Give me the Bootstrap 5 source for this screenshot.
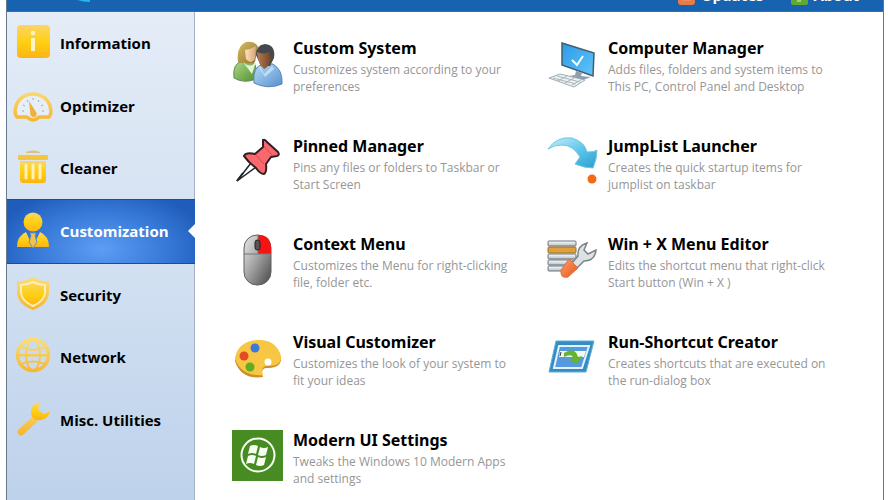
<!DOCTYPE html>
<html lang="en">
<head>
<meta charset="utf-8">
<meta name="viewport" content="width=device-width, initial-scale=1">
<title>Customization</title>
<link href="https://cdn.jsdelivr.net/npm/bootstrap@5.3.0/dist/css/bootstrap.min.css" rel="stylesheet">
<style>
body { font-family: "Open Sans", "Noto Sans", sans-serif; background: #fff; color: #000; }
.app-window { margin: 0 4px 0 6px; border: solid #65788c; border-width: 0 1px; }
.title-strip { height: 12px; background: #1763b0; border-bottom: 1px solid #3b6c9f; overflow: hidden; padding: 0 24px 0 68px; }
.title-strip a { color: #fff; font-size: 15px; font-weight: 700; line-height: 20px; gap: 6px; margin-bottom: 6px; }
.title-links { gap: 27px; }
.side-menu { width: 188px; flex: none; padding-bottom: 49px; background: linear-gradient(#e4ecf7, #d3e1f2 50%, #bed2eb); border-right: 1px solid #a4b2c4; }
.side-link { flex: 1 1 0; min-height: 60px; padding-left: 6px; gap: 7px; color: #000; font-size: 15px; font-weight: 700; line-height: 20px; }
.side-link svg { width: 40px; height: 40px; flex: none; }
.side-link.active { position: relative; color: #fff; margin-right: -1px; border: solid #164e9f; border-width: 1px 0; background: radial-gradient(ellipse 110px 62px at 50% 78%, #5d9df5, #3476d5 65%, #205cba); }
.side-link.active::after { content: ""; position: absolute; right: 0; top: 50%; margin-top: -7px; border: solid transparent; border-width: 7px 7px 7px 0; border-right-color: #fff; }
.feature-grid { display: grid; grid-template-columns: repeat(auto-fill, 315px); grid-auto-rows: 58px; row-gap: 40px; padding: 24px 20px 0 37px; align-content: start; }
.feature { color: #969696; gap: 9px; }
.feature svg { width: 52px; height: 52px; flex: none; margin-top: 2px; }
.feature h2 { font-family: "Noto Sans", "Open Sans", sans-serif; font-size: 16px; line-height: 24px; font-weight: 700; color: #000; margin: 0; }
.feature p { font-size: 12px; line-height: 17px; margin: 0; padding-top: 1px; white-space: nowrap; }
</style>
<script src="https://cdn.jsdelivr.net/npm/bootstrap@5.3.0/dist/js/bootstrap.bundle.min.js"></script>
</head>
<body>
<svg width="0" height="0" class="position-absolute" aria-hidden="true">
<defs>
<linearGradient id="gold" x2="0" y2="1"><stop stop-color="#fbd568"/><stop offset=".5" stop-color="#ffd012"/><stop offset="1" stop-color="#fcb414"/></linearGradient>
<linearGradient id="goldline" gradientUnits="userSpaceOnUse" x1="0" y1="3" x2="0" y2="37"><stop stop-color="#fbdc74"/><stop offset="1" stop-color="#f5b42c"/></linearGradient>
<linearGradient id="green" x2="1" y2="1"><stop stop-color="#b1d98a"/><stop offset="1" stop-color="#4f8f2d"/></linearGradient>
<linearGradient id="blue" x2="1" y2="1"><stop stop-color="#b6dcf8"/><stop offset="1" stop-color="#5790cd"/></linearGradient>
<linearGradient id="hair" x2="1" y2="1"><stop stop-color="#d7bd65"/><stop offset="1" stop-color="#8f7428"/></linearGradient>
<linearGradient id="face" x2="1"><stop stop-color="#fce2c0"/><stop offset="1" stop-color="#d7a577"/></linearGradient>
<linearGradient id="dark" x2="1"><stop stop-color="#b57c51"/><stop offset="1" stop-color="#744329"/></linearGradient>
<linearGradient id="screen" x2="1" y2="1"><stop stop-color="#2b9be8"/><stop offset="1" stop-color="#62c4fa"/></linearGradient>
<linearGradient id="arrow" x2="1" y2="1"><stop stop-color="#c8effb"/><stop offset=".55" stop-color="#5bc4e8"/><stop offset="1" stop-color="#279fce"/></linearGradient>
<linearGradient id="mouse" x2="1" y2="1"><stop stop-color="#ececec"/><stop offset=".45" stop-color="#a7a7a7"/><stop offset="1" stop-color="#474747"/></linearGradient>
<linearGradient id="handle" x2="1" y2="1"><stop stop-color="#ffa06d"/><stop offset="1" stop-color="#e65418"/></linearGradient>
<linearGradient id="bar" x2="0" y2="1"><stop stop-color="#fff"/><stop offset="1" stop-color="#b5bdc3"/></linearGradient>
</defs>
</svg>
<div class="app-window min-vh-100 d-flex flex-column">
  <header class="title-strip d-flex justify-content-between align-items-end">
    <svg class="align-self-start" width="16" height="4" viewBox="0 0 16 4" aria-hidden="true"><path d="M2 0H15V2Q8 2 2 0Z" fill="#22b5ee"/></svg>
    <div class="title-links d-flex align-items-end">
      <a href="#" class="d-flex align-items-end text-decoration-none"><svg width="17" height="16" viewBox="0 0 17 16" aria-hidden="true"><rect width="17" height="16" rx="3" fill="#e87949"/><path d="M4 4H13V12H4Z" fill="#ef8c60"/></svg>Updates</a>
      <a href="#" class="d-flex align-items-end text-decoration-none"><svg width="17" height="16" viewBox="0 0 17 16" aria-hidden="true"><rect width="17" height="16" rx="2" fill="#61a832"/><path d="M6 3H10V13H6Z" fill="#a6cf7b"/></svg>About</a>
    </div>
  </header>
  <div class="d-flex flex-grow-1">
    <nav class="side-menu d-flex flex-column" aria-label="Sections">
      <a href="#" class="side-link d-flex align-items-center text-decoration-none"><svg viewBox="0 0 40 40" aria-hidden="true"><rect x="4" y="2" width="33" height="33" rx="4" fill="url(#gold)"/><circle cx="20" cy="10" r="2.300" fill="#fff2c4"/><path d="M18 15H22V28H18Z" fill="#fff2c4"/></svg>Information</a>
      <a href="#" class="side-link d-flex align-items-center text-decoration-none"><svg viewBox="0 0 40 40" aria-hidden="true"><path d="M4 31Q1 28 2.800 21A17.500 16 0 0 1 37.200 21Q39 28 36 31H26Q20 37 14 31Z" fill="#e6eef7" stroke="url(#goldline)" stroke-width="3.500" stroke-linejoin="round"/><path d="M9 25h2M10 19l2 1M14 14l1 2M20 12v2M26 14l-1 2M30 19l-2 1M31 25h-2" stroke="#9daab5"/><path d="M16 15L23 26A3.200 3.200 0 1 1 17.300 28Z" fill="#edb13d"/></svg>Optimizer</a>
      <a href="#" class="side-link d-flex align-items-center text-decoration-none"><svg viewBox="0 0 40 40" aria-hidden="true"><path d="M13 4Q20 1 27 4V5H13Z" fill="#dec076"/><rect x="5" y="7" width="30" height="5" rx="1" fill="#f4c53f"/><path d="M7 13H33V32Q33 35 30 35H10Q7 35 7 32Z" fill="url(#gold)"/><path d="M13 17V30M20 17V30M27 17V30" stroke="#fff0b6" stroke-width="3" stroke-linecap="round"/></svg>Cleaner</a>
      <a href="#" class="side-link active d-flex align-items-center text-decoration-none" aria-current="page"><svg viewBox="0 0 40 40" aria-hidden="true"><circle cx="20" cy="11" r="9.500" fill="url(#gold)"/><path d="M4 36Q4 25 13 21L20 36L27 21Q36 25 36 36Z" fill="url(#gold)"/><path d="M17 22H23L22 25L24 31L20 37L16 31L18 25Z" fill="#f2c24b" stroke="#6d91b9"/></svg>Customization</a>
      <a href="#" class="side-link d-flex align-items-center text-decoration-none"><svg viewBox="0 0 40 40" aria-hidden="true"><path d="M20 2Q28 7 36 6V17Q36 29 20 35Q4 29 4 17V6Q12 7 20 2Z" fill="url(#goldline)"/><path d="M20 7Q26 10 32 10V18Q31 26 20 31Q9 26 8 18V10Q14 10 20 7Z" fill="url(#gold)" stroke="#fff0b0" stroke-width="2"/></svg>Security</a>
      <a href="#" class="side-link d-flex align-items-center text-decoration-none"><svg viewBox="0 0 40 40" aria-hidden="true"><g fill="none" stroke="url(#goldline)"><circle cx="20" cy="18" r="15.500" stroke-width="3.500"/><ellipse cx="20" cy="18" rx="7" ry="15" stroke-width="2"/><path d="M8 10Q20 16 32 10M5 18.500H35M5 18H35M8 27Q20 22 32 27" stroke-width="2"/></g></svg>Network</a>
      <a href="#" class="side-link d-flex align-items-center text-decoration-none"><svg viewBox="0 0 40 40" aria-hidden="true"><path d="M8 32L21 20" stroke="url(#goldline)" stroke-width="7" stroke-linecap="round"/><path d="M27 2Q17 4 18 14Q20 21 28 20Q36 18 37 11L31 14L25 10Z" fill="url(#gold)"/></svg>Misc. Utilities</a>
    </nav>
    <main class="feature-grid flex-grow-1">
      <a href="#" class="feature d-flex align-items-start text-decoration-none"><svg viewBox="0 0 52 52" aria-hidden="true"><path d="M2 40Q0 25 11 23L21 24Q26 29 24 41Q12 46 2 40Z" fill="url(#green)" stroke="#65884f"/><path d="M6 24Q4 8 14 4Q24 3 26 9L23 24Q17 27 6 24Z" fill="url(#hair)"/><path d="M13 12Q19 11 24 8L23 21Q19 27 14 21Z" fill="url(#face)"/><path d="M11 24Q18 31 24 24L20 36Z" fill="#e8f0d5"/><path d="M22 45Q20 29 31 26L41 26Q51 32 50 46Q36 52 22 45Z" fill="url(#blue)" stroke="#5a87b4"/><path d="M24 17Q24 7 33 6Q44 7 42 20L38 28H29Z" fill="#45494e"/><path d="M25 14Q32 17 37 14L39 21Q36 30 32 31Q26 27 25 14Z" fill="url(#dark)"/><path d="M28 28L32 36L40 28L42 31L33 39L27 30Z" fill="#bcdcf4"/></svg><span class="d-block"><h2>Custom System</h2><p>Customizes system according to your<br>preferences</p></span></a>
      <a href="#" class="feature d-flex align-items-start text-decoration-none"><svg viewBox="0 0 52 52" aria-hidden="true"><path d="M15 5L47 15L46 38L15 27Z" fill="url(#screen)" stroke="#465c69" stroke-width="1.500"/><path d="M25 22L30 27L36 18" fill="none" stroke="#fff" stroke-width="2"/><path d="M29 33L35 35L34 38L44 39L36 42L22 38L28 37Z" fill="#8ca1ad"/><path d="M2 40L13 36L38 42L27 49Z" fill="#eef2f5" stroke="#9fabb2"/><path d="M6 40L29 46M10 38L33 44M11 43L20 38M18 45L27 40M25 47L34 42" stroke="#a9b5bc"/></svg><span class="d-block"><h2>Computer Manager</h2><p>Adds files, folders and system items to<br>This PC, Control Panel and Desktop</p></span></a>
      <a href="#" class="feature d-flex align-items-start text-decoration-none"><svg viewBox="0 0 52 52" aria-hidden="true"><path d="M19 27L5 45L24 31Z" fill="#fff" stroke="#20272c" stroke-width="1.500"/><path d="M5 45L11 37" stroke="#20272c" stroke-width="2"/><path d="M31 4Q33 3 35 6L46 16Q48 19 45 20L39 21L34 28Q35 36 32 38Q28 38 24 32L17 26L12 20Q14 16 23 18L31 11Z" fill="#f9686e" stroke="#321e25" stroke-width="2" stroke-linejoin="round"/><path d="M32 10L40 19M24 19L32 28" stroke="#d94950"/></svg><span class="d-block"><h2>Pinned Manager</h2><p>Pins any files or folders to Taskbar or<br>Start Screen</p></span></a>
      <a href="#" class="feature d-flex align-items-start text-decoration-none"><svg viewBox="0 0 52 52" aria-hidden="true"><path d="M1 13Q10 0 25 2Q38 6 40 16Q48 16 50 14Q50 23 46 32Q37 32 28 28L33 21Q26 9 15 9Q7 9 1 13Z" fill="url(#arrow)" stroke="#73c7e1"/><circle cx="45" cy="43" r="4.500" fill="#f46a1c"/></svg><span class="d-block"><h2>JumpList Launcher</h2><p>Creates the quick startup items for<br>jumplist on taskbar</p></span></a>
      <a href="#" class="feature d-flex align-items-start text-decoration-none"><svg viewBox="0 0 52 52" aria-hidden="true"><rect x="12" y="1" width="27" height="50" rx="13" fill="url(#mouse)" stroke="#606060"/><path d="M26 1Q39 1 39 14V20H26Z" fill="#f51414"/><path d="M12 20H39M26 1V20" stroke="#777"/><rect x="23" y="6" width="5" height="10" rx="2.500" fill="#555" stroke="#222"/></svg><span class="d-block"><h2>Context Menu</h2><p>Customizes the Menu for right-clicking<br>file, folder etc.</p></span></a>
      <a href="#" class="feature d-flex align-items-start text-decoration-none"><svg viewBox="0 0 52 52" aria-hidden="true"><g fill="url(#bar)" stroke="#68767d"><rect x="1" y="7" width="28" height="5" rx="1"/><rect x="1" y="20" width="28" height="5" rx="1"/><rect x="1" y="26" width="25" height="5" rx="1"/><rect x="1" y="32" width="19" height="5" rx="1"/></g><rect x="1" y="13" width="28" height="6" rx="1" fill="#e1a13a" stroke="#94713b"/><path d="M25 29L31 22Q30 12 40 9L37 16L41 20L49 16Q48 27 37 27L30 34Z" fill="#dce2e5" stroke="#7b8589" stroke-width="1.500"/><path d="M22 25L31 34L21 43Q13 45 14 36Z" fill="url(#handle)" stroke="#db7245"/></svg><span class="d-block"><h2>Win + X Menu Editor</h2><p>Edits the shortcut menu that right-click<br>Start button (Win + X )</p></span></a>
      <a href="#" class="feature d-flex align-items-start text-decoration-none"><svg viewBox="0 0 52 52" aria-hidden="true"><path d="M3 29Q5 11 25 9Q43 7 49 25Q50 37 34 36Q28 37 31 45Q9 48 3 29Z" fill="#c99028"/><path d="M3 27Q5 10 25 8Q44 7 49 24Q50 35 35 34Q28 35 31 43Q10 45 3 27Z" fill="#f7c643"/><circle cx="23" cy="16" r="4.500" fill="#3d79db"/><circle cx="12" cy="24" r="4.500" fill="#e34a25"/><circle cx="18" cy="35" r="4.500" fill="#5eae24"/><circle cx="36" cy="30" r="3.500" fill="#fff"/></svg><span class="d-block"><h2>Visual Customizer</h2><p>Customizes the look of your system to<br>fit your ideas</p></span></a>
      <a href="#" class="feature d-flex align-items-start text-decoration-none"><svg viewBox="0 0 52 52" aria-hidden="true"><path d="M9 9H47L39 40H2Z" fill="#348cc2" stroke="#5faed6"/><path d="M12 14H42L35 36H7Z" fill="#5799df" stroke="#e0f3ff" stroke-width="2"/><path d="M13 19H39L37 25H12Z" fill="#f3f9ef"/><path d="M14 20L13 24" stroke="#333"/><path d="M17 21Q28 14 31 25L35 24L30 32L22 28L26 26Q25 21 17 25Z" fill="#63b431"/></svg><span class="d-block"><h2>Run-Shortcut Creator</h2><p>Creates shortcuts that are executed on<br>the run-dialog box</p></span></a>
      <a href="#" class="feature d-flex align-items-start text-decoration-none"><svg viewBox="0 0 52 52" aria-hidden="true"><rect width="51" height="51" fill="#478c23"/><circle cx="26" cy="25" r="16.500" fill="none" stroke="#f7fff1" stroke-width="2"/><path d="M18 16Q22 14 26 16L24 24Q20 22 16 24ZM28 17Q32 19 36 17L34 25Q30 27 26 25ZM16 26Q20 24 24 26L22 34Q18 32 14 34ZM26 27Q30 29 34 27L32 35Q28 37 24 35Z" fill="#f7fff1"/></svg><span class="d-block"><h2>Modern UI Settings</h2><p>Tweaks the Windows 10 Modern Apps<br>and settings</p></span></a>
    </main>
  </div>
</div>
</body>
</html>
